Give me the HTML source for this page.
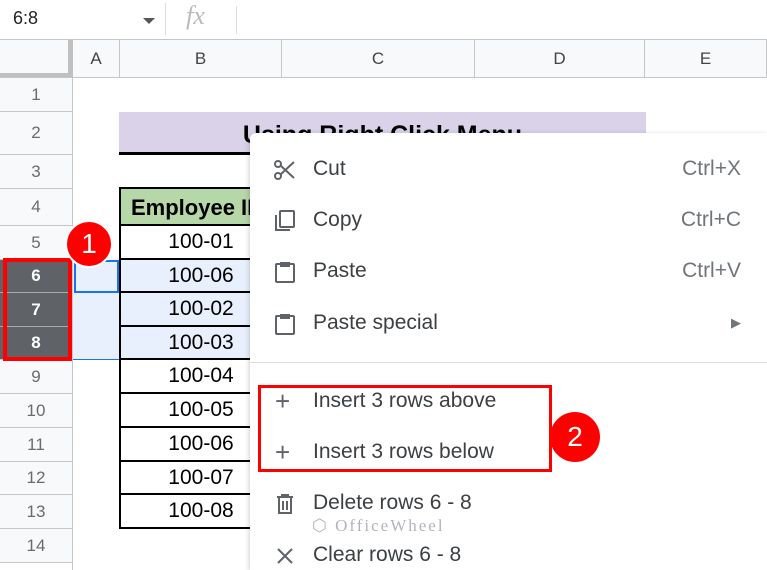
<!DOCTYPE html>
<html style="overflow:hidden;height:570px"><head><style>
*{margin:0;padding:0;box-sizing:border-box}
body{width:767px;height:570px;overflow:hidden;background:#fff;font-family:"Liberation Sans",Arial,sans-serif;position:relative}
.a{position:absolute}
.rh{position:absolute;left:0;width:72px;background:#f8f9fa;border-bottom:1px solid #c6c6c6;color:#6b6b6b;font-size:17px;text-align:center}
.sel{background:#5f6368;color:#fff;font-weight:bold}
.ch{position:absolute;top:40px;height:38px;background:#f8f9fa;border-right:1px solid #c6c6c6;color:#444;font-size:17px;text-align:center;line-height:38px}
.cell{position:absolute;left:119px;width:162px;border-left:2px solid #000;border-bottom:2px solid #000;font-size:21px;text-align:center;color:#000;white-space:nowrap}
.mi{position:absolute;left:0;right:0;height:50px;font-size:21px;color:#3c4043;line-height:50px}
.mi .t{position:absolute;left:63px}
.mi .k{position:absolute;right:26px;color:#70757a}
.mi svg{position:absolute;left:23px;top:14px}
</style></head><body>
<div class="a" style="left:0;top:0;width:767px;height:40px;background:#fff;border-bottom:1px solid #c6c6c6"></div>
<div class="a" style="left:13px;top:8px;font-size:18px;color:#222">6:8</div>
<div class="a" style="left:143px;top:18px;width:0;height:0;border-left:6px solid transparent;border-right:6px solid transparent;border-top:6px solid #555"></div>
<div class="a" style="left:165px;top:3px;width:1px;height:32px;background:#ddd"></div>
<div class="a" style="left:186px;top:1px;font-family:'Liberation Serif',serif;font-style:italic;font-size:26px;color:#bbb">fx</div>
<div class="a" style="left:236px;top:6px;width:1px;height:28px;background:#ddd"></div>
<div class="a" style="left:0;top:40px;width:73px;height:38px;background:#f8f9fa;border-right:5px solid #c0c0c0;border-bottom:5px solid #c0c0c0"></div>
<div class="ch" style="left:73px;width:47px">A</div>
<div class="ch" style="left:120px;width:162px">B</div>
<div class="ch" style="left:282px;width:193px">C</div>
<div class="ch" style="left:475px;width:170px">D</div>
<div class="ch" style="left:645px;width:122px">E</div>
<div class="a" style="left:0;top:77px;width:767px;height:1px;background:#c6c6c6"></div>
<div class="a" style="left:72px;top:78px;width:1px;height:492px;background:#c6c6c6"></div>
<div class="rh" style="top:78px;height:34px;line-height:33px">1</div>
<div class="rh" style="top:112px;height:43px;line-height:42px">2</div>
<div class="rh" style="top:155px;height:34px;line-height:33px">3</div>
<div class="rh" style="top:189px;height:37px;line-height:36px">4</div>
<div class="rh" style="top:226px;height:34px;line-height:33px">5</div>
<div class="rh sel" style="top:260px;height:33px;line-height:32px;border-bottom-color:#aaa">6</div>
<div class="rh sel" style="top:293px;height:34px;line-height:33px;border-bottom-color:#aaa">7</div>
<div class="rh sel" style="top:327px;height:33px;line-height:32px">8</div>
<div class="rh" style="top:360px;height:34px;line-height:33px">9</div>
<div class="rh" style="top:394px;height:34px;line-height:33px">10</div>
<div class="rh" style="top:428px;height:34px;line-height:33px">11</div>
<div class="rh" style="top:462px;height:33px;line-height:32px">12</div>
<div class="rh" style="top:495px;height:34px;line-height:33px">13</div>
<div class="rh" style="top:529px;height:34px;line-height:33px">14</div>
<div class="a" style="left:3px;top:258px;width:69px;height:103px;border:4px solid #f00"></div>
<div class="a" style="left:73px;top:260px;width:200px;height:100px;background:#e8f0fd;border-top:1px solid #1a73e8;border-bottom:1px solid #1a73e8"></div>
<div class="a" style="left:74px;top:260px;width:45px;height:33px;border:2px solid #1a73e8"></div>
<div class="a" style="left:119px;top:112px;width:527px;height:43px;background:#d9d2e9;border-bottom:3px solid #000;font-weight:bold;font-size:25px;text-align:center;line-height:46px">Using Right Click Menu</div>
<div class="cell" style="top:187px;height:39px;background:#b6d7a8;border-top:2px solid #000;font-weight:bold;line-height:37px;text-align:left;padding-left:10px;font-size:22px">Employee ID</div>
<div class="cell" style="top:226px;height:34px;line-height:32px">100-01</div>
<div class="cell" style="top:260px;height:33px;line-height:31px;background:#e8f0fd">100-06</div>
<div class="cell" style="top:293px;height:34px;line-height:32px;background:#e8f0fd">100-02</div>
<div class="cell" style="top:327px;height:33px;line-height:31px;background:#e8f0fd">100-03</div>
<div class="cell" style="top:360px;height:34px;line-height:32px">100-04</div>
<div class="cell" style="top:394px;height:34px;line-height:32px">100-05</div>
<div class="cell" style="top:428px;height:34px;line-height:32px">100-06</div>
<div class="cell" style="top:462px;height:33px;line-height:31px">100-07</div>
<div class="cell" style="top:495px;height:34px;line-height:32px">100-08</div>
<div class="a" style="left:65px;top:220px;width:48px;height:48px;border-radius:50%;background:#f00;color:#fff;font-size:28px;text-align:center;line-height:44px;border:2px solid #fff">1</div>
<div class="a" style="left:250px;top:133px;width:517px;height:437px;background:#fff;border-radius:6px 0 0 0;box-shadow:0 2px 6px rgba(0,0,0,.25);overflow:hidden">
 <div class="mi" style="top:11px"><svg width="24" height="24" viewBox="0 0 24 24" fill="none" stroke="#5f6368" stroke-width="2"><circle cx="5" cy="6" r="3"/><circle cx="5" cy="18" r="3"/><path d="M7.5 7.5L21 20M7.5 16.5L21 4"/></svg><span class="t">Cut</span><span class="k">Ctrl+X</span></div>
 <div class="mi" style="top:62px"><svg width="24" height="24" viewBox="0 0 24 24" fill="none" stroke="#5f6368" stroke-width="2"><rect x="7" y="2" width="14" height="16" rx="1"/><path d="M3 6v15h14"/></svg><span class="t">Copy</span><span class="k">Ctrl+C</span></div>
 <div class="mi" style="top:113px"><svg width="24" height="24" viewBox="0 0 24 24" fill="none" stroke="#5f6368" stroke-width="2"><rect x="3" y="4" width="18" height="18" rx="1"/><path d="M8 3h8v3H8z" fill="#5f6368"/></svg><span class="t">Paste</span><span class="k">Ctrl+V</span></div>
 <div class="mi" style="top:165px"><svg width="24" height="24" viewBox="0 0 24 24" fill="none" stroke="#5f6368" stroke-width="2"><rect x="3" y="4" width="18" height="18" rx="1"/><path d="M8 3h8v3H8z" fill="#5f6368"/></svg><span class="t">Paste special</span><span class="k" style="font-size:13px">&#9654;</span></div>
 <div class="a" style="left:0;top:229px;width:517px;height:1px;background:#dadce0"></div>
 <div class="mi" style="top:243px"><span class="a" style="left:25px;font-size:26px;color:#5f6368">+</span><span class="t">Insert 3 rows above</span></div>
 <div class="mi" style="top:294px"><span class="a" style="left:25px;font-size:26px;color:#5f6368">+</span><span class="t">Insert 3 rows below</span></div>
 <div class="mi" style="top:345px"><svg width="24" height="24" viewBox="0 0 24 24" fill="none" stroke="#5f6368" stroke-width="2"><path d="M4 5h16M9 5V3h6v2M6 5v16h12V5M10 9v9M14 9v9"/></svg><span class="t">Delete rows 6 - 8</span></div>
 <div class="mi" style="top:397px"><svg width="24" height="24" viewBox="0 0 24 24" fill="none" stroke="#5f6368" stroke-width="2"><path d="M5 5l14 14M19 5L5 19"/></svg><span class="t">Clear rows 6 - 8</span></div>
 <div class="a" style="left:62px;top:383px;font-family:'Liberation Serif',serif;font-size:17px;letter-spacing:2px;color:#b0b4bc">&#x2B21; OfficeWheel</div>
</div>
<div class="a" style="left:258px;top:385px;width:294px;height:87px;border:3px solid #f00"></div>
<div class="a" style="left:550px;top:412px;width:50px;height:50px;border-radius:50%;background:#f00;color:#fff;font-size:28px;text-align:center;line-height:50px">2</div>
</body></html>
